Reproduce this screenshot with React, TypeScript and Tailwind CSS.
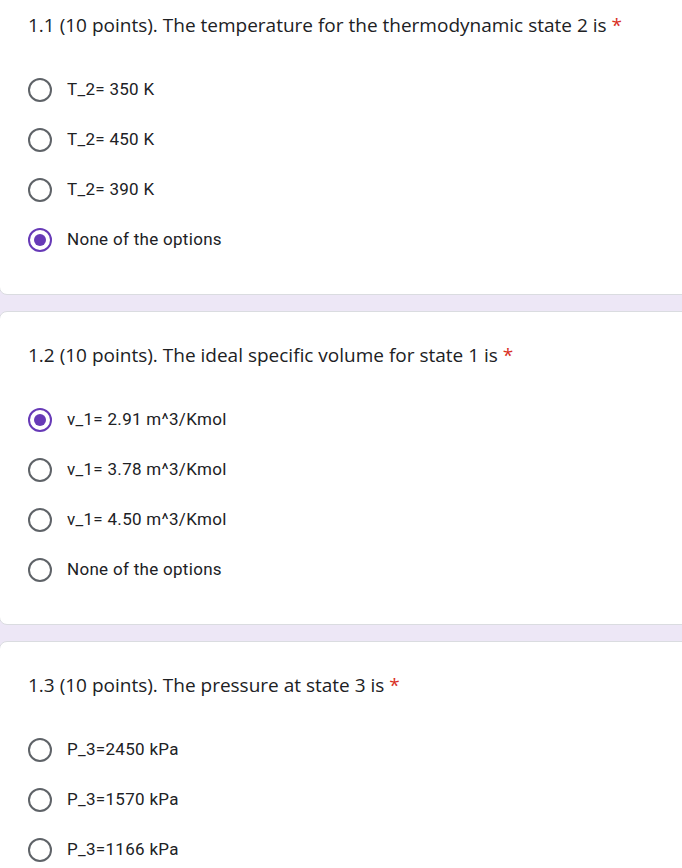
import React from 'react';

interface Question {
  title: string;
  options: string[];
  selected: number | null;
}

const questions: Question[] = [
  {
    title: '1.1 (10 points). The temperature for the thermodynamic state 2 is',
    options: ['T_2= 350 K', 'T_2= 450 K', 'T_2= 390 K', 'None of the options'],
    selected: 3,
  },
  {
    title: '1.2 (10 points). The ideal specific volume for state 1 is',
    options: ['v_1= 2.91 m^3/Kmol', 'v_1= 3.78 m^3/Kmol', 'v_1= 4.50 m^3/Kmol', 'None of the options'],
    selected: 0,
  },
  {
    title: '1.3 (10 points). The pressure at state 3 is',
    options: ['P_3=2450 kPa', 'P_3=1570 kPa', 'P_3=1166 kPa', 'None of the options'],
    selected: null,
  },
];

function Radio({ checked }: { checked: boolean }) {
  return (
    <div
      className={`w-6 h-6 shrink-0 rounded-full border-[2.5px] flex items-center justify-center ${
        checked ? 'border-[#673ab7]' : 'border-[#5f6368]'
      }`}
    >
      {checked && <div className="w-3 h-3 rounded-full bg-[#673ab7]" />}
    </div>
  );
}

function QuestionCard({ q }: { q: Question }) {
  return (
    <div className="bg-white border border-[#dadce0] rounded-lg -ml-px -mr-2 pl-7 pt-[31px] pb-[29px]">
      <div className="text-[19px] text-[#202124] leading-6 font-['Open_Sans',sans-serif]">
        {q.title} <span className="text-[#d93025]">*</span>
      </div>
      <div className="mt-[28px] flex flex-col">
        {q.options.map((opt, i) => (
          <label key={opt} className="h-[50px] flex items-center gap-[15px] cursor-pointer">
            <Radio checked={q.selected === i} />
            <span className="text-[17px] tracking-[0.3px] text-[#202124] font-['Roboto',sans-serif]">{opt}</span>
          </label>
        ))}
      </div>
    </div>
  );
}

export default function App() {
  return (
    <div className="h-screen bg-[#ede7f6] overflow-hidden">
      <div className="-mt-[19px] flex flex-col gap-4">
        {questions.map((q) => (
          <QuestionCard key={q.title} q={q} />
        ))}
      </div>
    </div>
  );
}
